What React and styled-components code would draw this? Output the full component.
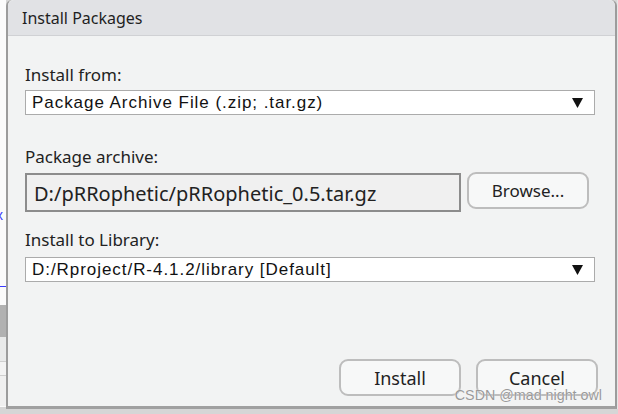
import React from 'react';
import styled, { createGlobalStyle } from 'styled-components';

const GlobalStyle = createGlobalStyle`
  html, body {
    margin: 0;
    padding: 0;
    width: 618px;
    height: 414px;
    overflow: hidden;
    background: #d6d6d6;
  }
`;

const Screen = styled.div`
  width: 618px;
  height: 414px;
  display: flex;
  align-items: flex-start;
  background: #d6d6d6;
`;

const Backdrop = styled.div`
  width: 6px;
  height: 407px;
  flex-shrink: 0;
  display: flex;
  flex-direction: column;
  background: #fbfbfb;
`;

const BackdropPiece = styled.div`
  height: ${p => p.h}px;
  flex-shrink: 0;
  background: ${p => p.bg || 'transparent'};
  border-bottom: ${p => (p.line ? `1px solid ${p.line}` : 'none')};
  color: #3b3bff;
  font-family: "Liberation Sans", Arial, sans-serif;
  font-size: 14px;
  line-height: ${p => p.h}px;
  overflow: hidden;
  text-indent: -4px;
`;

const Dialog = styled.div`
  width: 607px;
  height: 406px;
  flex-shrink: 0;
  display: flex;
  flex-direction: column;
  background: #f2f3f3;
  border-left: 2px solid #9c9c9c;
  border-right: 2px solid #9c9c9c;
  border-bottom: 3px solid #a0a0a0;
  border-top-left-radius: 6px;
  border-top-right-radius: 6px;
  font-family: "Noto Sans", "Open Sans", sans-serif;
  color: #222;
`;

const TitleBar = styled.div`
  height: 35px;
  flex-shrink: 0;
  display: flex;
  align-items: center;
  padding-left: 14px;
  background: #e1e2e5;
  border-bottom: 1px solid #d0d1d4;
  border-top-left-radius: 6px;
  border-top-right-radius: 6px;
  font-size: 16px;
  color: #1f1f1f;
`;

const Body = styled.div`
  flex: 1;
  display: flex;
  flex-direction: column;
  padding: 28px 17px 0 17px;
  position: relative;
`;

const Label = styled.div`
  font-size: 17px;
  line-height: 22px;
  color: #222;
  margin-bottom: ${p => p.mb}px;
`;

const Section = styled.div`
  display: flex;
  flex-direction: column;
  margin-bottom: ${p => p.gap}px;
`;

const Select = styled.div`
  height: 25px;
  width: 570px;
  box-sizing: border-box;
  display: flex;
  align-items: center;
  justify-content: space-between;
  padding: 0 11px 0 6px;
  background: #ffffff;
  border: 1px solid #ababab;
  font-family: "Liberation Sans", Arial, sans-serif;
  font-size: 17px;
  letter-spacing: 0.95px;
  color: #111;
`;

const FileRow = styled.div`
  display: flex;
  align-items: flex-start;
  gap: 6px;
`;

const PathBox = styled.div`
  width: 436px;
  height: 39px;
  box-sizing: border-box;
  display: flex;
  align-items: center;
  padding: 2px 0 0 7px;
  background: #f0f0f0;
  border: 2px solid #8c8c8c;
  font-size: 20px;
  color: #222;
`;

const Button = styled.button`
  width: 122px;
  height: 37px;
  box-sizing: border-box;
  border-radius: 9px;
  border: 2px solid #bdbdbd;
  background: #f7f8f8;
  font-family: "Noto Sans", "Open Sans", sans-serif;
  font-size: ${p => p.fs}px;
  color: #222;
  padding: 0;
  margin-top: ${p => p.mt || 0}px;
`;

const Footer = styled.div`
  margin-top: auto;
  display: flex;
  justify-content: flex-end;
  gap: 15px;
  padding-bottom: 10px;
`;

const Watermark = styled.div`
  position: absolute;
  right: 13px;
  bottom: 3px;
  font-family: "Liberation Sans", Arial, sans-serif;
  font-size: 14.3px;
  color: #9a9a9a;
  text-shadow: 0 0 1px #fff;
`;

const RightEdge = styled.div`
  width: 1px;
  height: 409px;
  background: #e6e6e6;
`;

const Caret = () => (
  <svg width="11" height="10" viewBox="0 0 11 10">
    <path d="M0 0 H11 L5.5 10 Z" fill="#111" />
  </svg>
);

export default function App() {
  return (
    <>
      <GlobalStyle />
      <Screen>
        <Backdrop>
          <BackdropPiece h={202} />
          <BackdropPiece h={26}>x</BackdropPiece>
          <BackdropPiece h={58} line="#3b3bff" />
          <BackdropPiece h={18} />
          <BackdropPiece h={32} bg="#b1b1b1" />
          <BackdropPiece h={24} bg="#e9eaea" line="#cfcfcf" />
          <BackdropPiece h={13} bg="#f3f3f3" line="#cfcfcf" />
          <BackdropPiece h={30} bg="#f0f0f0" />
        </Backdrop>
        <Dialog>
          <TitleBar>Install Packages</TitleBar>
          <Body>
            <Section gap={31}>
              <Label mb={4}>Install from:</Label>
              <Select>
                <span>Package Archive File (.zip; .tar.gz)</span>
                <Caret />
              </Select>
            </Section>
            <Section gap={17}>
              <Label mb={5}>Package archive:</Label>
              <FileRow>
                <PathBox>D:/pRRophetic/pRRophetic_0.5.tar.gz</PathBox>
                <Button fs={17} mt={-1}>Browse...</Button>
              </FileRow>
            </Section>
            <Section gap={0}>
              <Label mb={6}>Install to Library:</Label>
              <Select>
                <span>D:/Rproject/R-4.1.2/library [Default]</span>
                <Caret />
              </Select>
            </Section>
            <Footer>
              <Button fs={18}>Install</Button>
              <Button fs={18}>Cancel</Button>
            </Footer>
            <Watermark>CSDN @mad night owl</Watermark>
          </Body>
        </Dialog>
        <RightEdge />
      </Screen>
    </>
  );
}
